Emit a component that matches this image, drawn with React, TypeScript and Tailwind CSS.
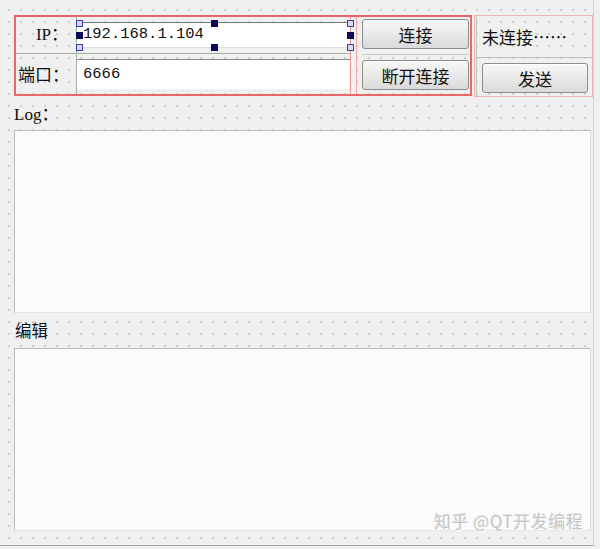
import React from 'react';

const mono = { fontFamily: '"Liberation Mono", "Noto Sans CJK SC", monospace' };
const cjk = { fontFamily: '"Noto Sans CJK SC", "Noto Sans", sans-serif' };
const serif = { fontFamily: '"Liberation Serif", "Noto Sans CJK SC", serif' };

function Handle({ filled, className }: { filled?: boolean; className: string }) {
  return (
    <span
      className={`absolute w-[7px] h-[7px] ${filled ? 'bg-[#0a0a5a] border border-[#0a0a5a]' : 'bg-[#d8d8f4] border border-[#3a3aa8]'} ${className}`}
    />
  );
}

function QButton({ label }: { label: string }) {
  return (
    <button
      className="w-full h-[30px] rounded-[3px] border border-[#8c8c8c] bg-gradient-to-b from-[#f8f8f8] to-[#dadada] text-[17px] text-[#111] leading-none shadow-[inset_0_1px_0_#ffffff]"
      style={cjk}
    >
      {label}
    </button>
  );
}

export default function App() {
  return (
    <div className="relative w-[600px] h-[549px] overflow-hidden bg-[#f0f0f0]">
      {/* designer canvas with its dot grid */}
      <div className="w-[594px] h-[546px] border-r border-b border-r-[#d4d4d4] border-b-[#a4a4a4] bg-[radial-gradient(circle,#c2c2c2_0.6px,transparent_1px)] bg-[length:12px_12px] bg-[position:3px_4px] pl-[14px] pt-[15px] flex flex-col">
        {/* top row */}
        <div className="flex h-[82px]">
          <div className="w-[458px] h-[81px] border-2 border-[#e66868] flex">
            {/* form layout */}
            <div className="w-[335px] border-r border-[#e79a9a] grid grid-cols-[61px_1fr] grid-rows-[37px_1fr]">
              <div className="border-r border-b border-[#9fb39f] flex items-center justify-end pr-[8px] text-[17px] text-[#111]" style={serif}>
                IP：
              </div>
              <div className="border-b border-[#9fb39f] pt-[5px] pb-[5px]">
                <div className="relative h-[26px] bg-white border-t border-[#7c7c7c] border-b border-b-[#dcdcdc] flex items-center pl-[6px] text-[15.5px] text-[#111]" style={mono}>
                  192.168.1.104
                  <Handle className="left-[-1px] top-[-3px]" />
                  <Handle filled className="left-[-1px] top-[9px]" />
                  <Handle className="left-[-1px] bottom-[-4px]" />
                  <Handle filled className="left-[134px] top-[-3px]" />
                  <Handle filled className="left-[134px] bottom-[-4px]" />
                  <Handle className="right-[-4px] top-[-3px]" />
                  <Handle filled className="right-[-4px] top-[9px]" />
                  <Handle className="right-[-4px] bottom-[-4px]" />
                </div>
              </div>
              <div className="border-r border-[#9fb39f] flex items-center pl-[2px] text-[17px] text-[#111]" style={cjk}>
                端口：
              </div>
              <div className="pt-[5px] pb-[4px]">
                <div className="h-[30px] bg-white border-t border-[#8c8c8c] flex items-center pl-[6px] text-[15.5px] text-[#111]" style={mono}>
                  6666
                </div>
              </div>
            </div>
            {/* button layout */}
            <div className="flex-1 ml-[5px] border-l border-[#ecaaaa] pl-[5px] pr-[1px] flex flex-col">
              <div className="pt-[2px] pb-[5px] border-b border-[#b9cbb9]">
                <QButton label="连接" />
              </div>
              <div className="pt-[5px]">
                <QButton label="断开连接" />
              </div>
            </div>
          </div>
          {/* status grid */}
          <div className="ml-[2px] w-[119px] h-[82px] border border-[#eab2b2] flex">
            <div className="flex-1 ml-[1px] border-l border-[#b9cbb9] flex flex-col">
              <div className="h-[42px] border-b border-[#bcbcbc] flex items-center pl-[5px] text-[17px] text-[#111]" style={cjk}>
                未连接……
              </div>
              <div className="pt-[5px] pl-[5px] pr-[4px]">
                <QButton label="发送" />
              </div>
            </div>
          </div>
        </div>

        {/* log */}
        <div className="h-[33px] flex items-center text-[17px] text-[#111] pt-[2px]" style={serif}>
          Log：
        </div>
        <div className="w-[577px] h-[183px] bg-[#fbfbfd] border border-[#bdbdbd] border-r-[#dedede] border-b-[#e4e4e4]" />

        {/* editor */}
        <div className="h-[35px] flex items-center text-[16.5px] text-[#111] pl-[1px]" style={cjk}>
          编辑
        </div>
        <div className="w-[577px] h-[183px] bg-[#fbfbfd] border border-[#bdbdbd] border-r-[#dedede] border-b-[#e4e4e4]" />
      </div>

      {/* watermark */}
      <div
        className="absolute left-[434px] top-[508px] text-[17px] text-[#c6c6c6] tracking-[0.5px] [text-shadow:1px_1px_0_#ffffff,-1px_-1px_0_#9a9a9a33]"
        style={cjk}
      >
        知乎 @QT开发编程
      </div>
    </div>
  );
}
